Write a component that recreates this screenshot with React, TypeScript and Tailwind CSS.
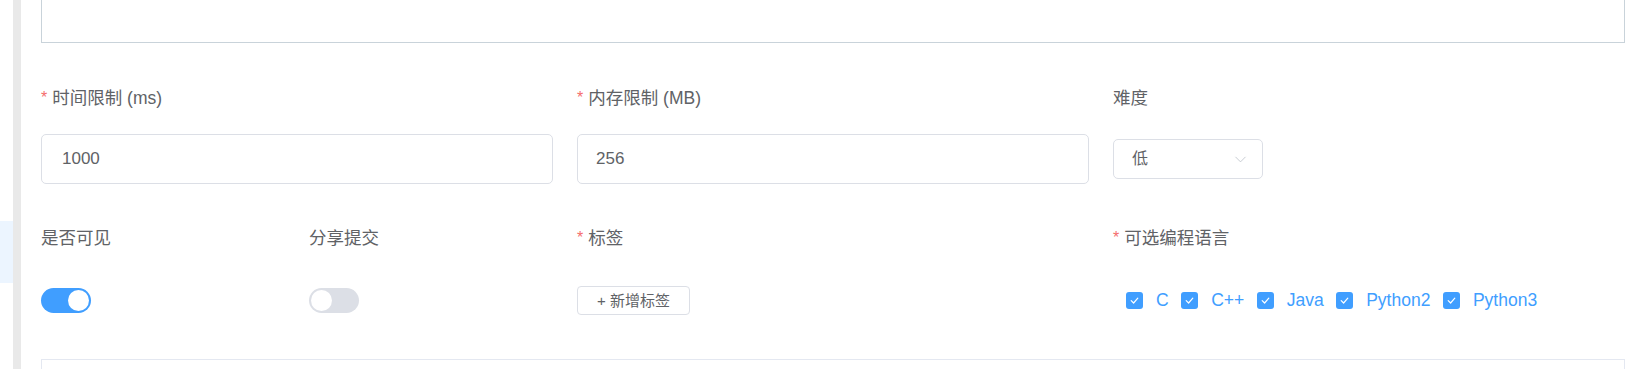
import { ChevronDown } from "lucide-react";

const font = { fontFamily: '"Liberation Sans", "Noto Sans CJK SC", sans-serif' };

const Label = ({ text, required }: { text: string; required?: boolean }) => (
  <div className="flex items-center h-[24px] text-[17.5px] leading-[24px] text-[#606266] whitespace-nowrap">
    {required && <span className="text-[#f56c6c] mr-[5px] text-[16px]">*</span>}
    <span>{text}</span>
  </div>
);

const Toggle = ({ on }: { on: boolean }) => (
  <div
    className={`w-[50px] h-[25px] rounded-full flex items-center px-[2px] ${
      on ? "bg-[#409eff] justify-end" : "bg-[#dcdfe6] justify-start"
    }`}
  >
    <div className="w-[21px] h-[21px] rounded-full bg-white" />
  </div>
);

const Check = ({ label }: { label: string }) => (
  <div className="flex items-center mr-[12.5px]">
    <div className="w-[17px] h-[17px] rounded-[3px] bg-[#409eff] flex items-center justify-center">
      <svg width="11" height="11" viewBox="0 0 11 11" fill="none">
        <path d="M2.2 5.6 L4.6 8 L8.8 3.2" stroke="white" strokeWidth="1.2" strokeLinecap="round" strokeLinejoin="round" />
      </svg>
    </div>
    <span className="ml-[13px] text-[17.5px] text-[#409eff] leading-[24px]">{label}</span>
  </div>
);

export default function App() {
  const langs = ["C", "C++", "Java", "Python2", "Python3"];

  return (
    <div className="w-[1631px] h-[369px] overflow-hidden bg-white flex" style={font}>
      {/* sidebar edge */}
      <div className="w-[13px] shrink-0">
        <div className="mt-[221px] h-[62px] bg-[#ecf5ff]" />
      </div>
      <div className="w-[8px] shrink-0 bg-[#e9e9e9]" />

      {/* form */}
      <div className="flex-1 pl-[20px] pr-[6px]">
        {/* bottom of the description editor */}
        <div className="h-[43px] border-x border-b border-[#c9d3da]" />

        {/* row 1 */}
        <div className="grid grid-cols-6 gap-x-[24px] mt-[43px]">
          <div className="col-span-2">
            <Label text="时间限制 (ms)" required />
            <div className="mt-[24px] h-[50px] border border-[#dcdfe6] rounded-[5px] flex items-center pl-[20px] text-[17px] text-[#606266]">
              1000
            </div>
          </div>
          <div className="col-span-2">
            <Label text="内存限制 (MB)" required />
            <div className="mt-[24px] h-[50px] border border-[#dcdfe6] rounded-[5px] flex items-center pl-[18px] text-[17px] text-[#606266]">
              256
            </div>
          </div>
          <div className="col-span-2">
            <Label text="难度" />
            <div className="mt-[24px] h-[50px] flex items-center">
              <div className="w-[150px] h-[40px] border border-[#dcdfe6] rounded-[5px] flex items-center justify-between pl-[18px] pr-[12px] text-[16px] text-[#606266]">
                <span>低</span>
                <ChevronDown className="w-[19px] h-[19px] text-[#c0c4cc]" strokeWidth={1.1} />
              </div>
            </div>
          </div>
        </div>

        {/* row 2 */}
        <div className="grid grid-cols-6 gap-x-[24px] mt-[42px]">
          <div className="col-span-1">
            <Label text="是否可见" />
            <div className="mt-[25px] h-[50px] flex items-center">
              <Toggle on />
            </div>
          </div>
          <div className="col-span-1">
            <Label text="分享提交" />
            <div className="mt-[25px] h-[50px] flex items-center">
              <Toggle on={false} />
            </div>
          </div>
          <div className="col-span-2">
            <Label text="标签" required />
            <div className="mt-[25px] h-[50px] flex items-center">
              <button className="h-[29px] px-[19px] border border-[#dcdfe6] rounded-[4px] bg-white text-[15px] text-[#606266] leading-none">
                + 新增标签
              </button>
            </div>
          </div>
          <div className="col-span-2">
            <Label text="可选编程语言" required />
            <div className="mt-[25px] h-[50px] flex items-center pl-[13px]">
              {langs.map((l) => (
                <Check key={l} label={l} />
              ))}
            </div>
          </div>
        </div>

        {/* next block */}
        <div className="mt-[34px] h-[40px] border border-[#e4e8f1]" />
      </div>
    </div>
  );
}
